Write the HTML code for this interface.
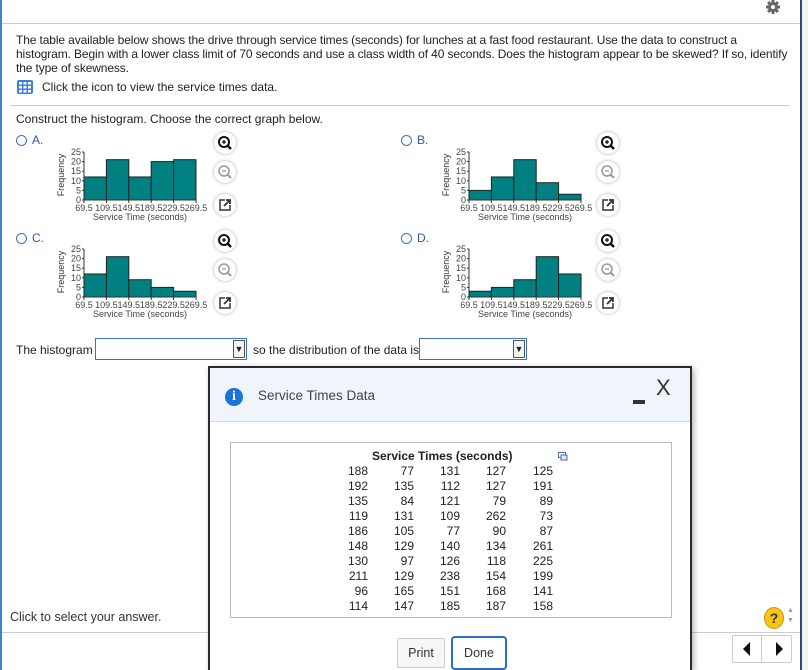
<!DOCTYPE html>
<html><head><meta charset="utf-8"><style>
*{margin:0;padding:0;box-sizing:border-box}
body{width:808px;height:670px;overflow:hidden;background:#fff;font-family:"Liberation Sans",Arial,sans-serif;color:#222;position:relative}
.abs{position:absolute}
.t{font-size:12px;line-height:14px}
.ic{position:absolute;width:22px;height:22px;border-radius:50%;background:#fff;box-shadow:0 0 3px rgba(0,0,0,.35)}
.radio{position:absolute;width:11px;height:11px;border:1.5px solid #4a6fb5;border-radius:50%}
.lab{position:absolute;font-size:12px;color:#3355aa}
.sel{position:absolute;height:22px;border:1px solid #3b6fd0;background:#fff}
.sel span{position:absolute;right:1px;top:1px;width:12px;height:18px;border:1px solid #555;background:#f4f4f4;font-size:9px;text-align:center;line-height:17px}
.dt td{font-size:12px;text-align:right;padding:0;height:15px;line-height:15px}
</style></head><body>
<div class="abs" style="left:0;top:0;width:2px;height:670px;background:#3b83d6"></div>
<div class="abs" style="left:800px;top:0;width:2px;height:670px;background:#2a4a7a"></div>
<div class="abs" style="left:802px;top:0;width:6px;height:670px;background:#f3f3f3"></div>
<div class="abs" style="left:2px;top:23px;width:798px;height:1px;background:#c8ced8"></div>
<svg class="abs" style="left:764px;top:0" width="18" height="16" viewBox="0 0 18 16"><g fill="#666"><circle cx="9" cy="7" r="5"/><rect x="7.5" y="0" width="3" height="14"/><rect x="2" y="5.5" width="14" height="3"/><rect x="7.5" y="0" width="3" height="14" transform="rotate(45 9 7)"/><rect x="7.5" y="0" width="3" height="14" transform="rotate(-45 9 7)"/></g><circle cx="9" cy="7" r="2" fill="#fff"/></svg>

<div class="abs t" style="left:16px;top:33px;white-space:nowrap;letter-spacing:-0.12px">The table available below shows the drive through service times (seconds) for lunches at a fast food restaurant. Use the data to construct a<br>histogram. Begin with a lower class limit of 70 seconds and use a class width of 40 seconds. Does the histogram appear to be skewed? If so, identify<br>the type of skewness.</div>
<svg class="abs" style="left:17px;top:80px" width="16" height="14"><rect width="16" height="14" rx="2" fill="#3b83d6"/><g fill="#fff"><rect x="2" y="2" width="3" height="2.5"/><rect x="6.5" y="2" width="3" height="2.5"/><rect x="11" y="2" width="3" height="2.5"/><rect x="2" y="6" width="3" height="2.5"/><rect x="6.5" y="6" width="3" height="2.5"/><rect x="11" y="6" width="3" height="2.5"/><rect x="2" y="10" width="3" height="2.5"/><rect x="6.5" y="10" width="3" height="2.5"/><rect x="11" y="10" width="3" height="2.5"/></g></svg>
<div class="abs t" style="left:42px;top:80px">Click the icon to view the service times data.</div>
<div class="abs" style="left:10px;top:105px;width:780px;height:1px;background:#c8ced8"></div>
<div class="abs t" style="left:16px;top:112px">Construct the histogram. Choose the correct graph below.</div>

<div class="radio" style="left:16px;top:135px"></div><div class="lab" style="left:32px;top:133px">A.</div>
<div class="radio" style="left:401px;top:135px"></div><div class="lab" style="left:417px;top:133px">B.</div>
<div class="radio" style="left:16px;top:233px"></div><div class="lab" style="left:32px;top:231px">C.</div>
<div class="radio" style="left:401px;top:233px"></div><div class="lab" style="left:417px;top:231px">D.</div>

<svg class="abs" style="left:55px;top:145px" width="170" height="80" id="cA"></svg>
<svg class="abs" style="left:440px;top:145px" width="170" height="80" id="cB"></svg>
<svg class="abs" style="left:55px;top:242px" width="170" height="80" id="cC"></svg>
<svg class="abs" style="left:440px;top:242px" width="170" height="80" id="cD"></svg>

<div class="abs t" style="left:16px;top:343px">The histogram</div>
<div class="sel" style="left:95px;top:338px;width:152px"><span>▼</span></div>
<div class="abs t" style="left:253px;top:343px">so the distribution of the data is</div>
<div class="sel" style="left:419px;top:338px;width:108px"><span>▼</span></div>

<div class="abs t" style="left:10px;top:610px;font-size:12.5px;color:#333">Click to select your answer.</div>
<div class="abs" style="left:2px;top:632px;width:798px;height:1px;background:#c8ced8"></div>
<div class="abs" style="left:764px;top:607px;width:20px;height:22px;border-radius:50%;background:#f5c518;border:1px solid #c99a00;text-align:center;font-weight:bold;font-size:14px;line-height:20px;color:#333">?</div>
<div class="abs" style="left:787px;top:606px;font-size:7px;color:#999;line-height:10px">▲<br>▼</div>
<div class="abs" style="left:732px;top:635px;width:60px;height:28px;border:1px solid #ccc;border-radius:2px;background:#fff"></div>
<div class="abs" style="left:761px;top:636px;width:1px;height:26px;background:#ccc"></div>
<svg class="abs" style="left:740px;top:641px" width="50" height="16"><polygon points="10,1 10,15 3,8" fill="#111"/><polygon points="36,1 36,15 43,8" fill="#111"/></svg>

<div class="abs" style="left:208px;top:366px;width:484px;height:304px;border:2px solid #2b2b2b;border-bottom:none;background:#fff;box-shadow:2px 2px 6px rgba(0,0,0,.3)">
 <div class="abs" style="left:0;top:0;width:480px;height:54px;background:#f0f5fc;border-bottom:1px solid #cfdcec"></div>
 <div class="abs" style="left:15px;top:20px;width:18px;height:18px;border-radius:50%;background:#1a73d6;color:#fff;font-weight:bold;font-family:'Liberation Serif',serif;font-size:14px;text-align:center;line-height:18px">i</div>
 <div class="abs" style="left:48px;top:20px;font-size:13.5px;color:#444">Service Times Data</div>
 <div class="abs" style="left:423px;top:32px;width:12px;height:4px;background:#333"></div>
 <div class="abs" style="left:446px;top:8px;font-size:22px;color:#333;line-height:24px">X</div>
 <div class="abs" style="left:20px;top:74px;width:442px;height:176px;border:1px solid #bbb"></div>
 <div class="abs" style="left:162px;top:81px;font-size:12px;font-weight:bold">Service Times (seconds)</div>
 <svg class="abs" style="left:348px;top:84px" width="10" height="10"><rect x="0.5" y="0.5" width="7" height="5" fill="#fff" stroke="#4a6fb5"/><rect x="3" y="3" width="6" height="5" fill="#dde6f5" stroke="#4a6fb5"/></svg>
 <table class="dt abs" style="left:132px;top:96px;border-collapse:collapse">
 <tr><td style="width:26px">188</td><td style="width:46px">77</td><td style="width:46px">131</td><td style="width:46px">127</td><td style="width:47px">125</td></tr>
 <tr><td>192</td><td>135</td><td>112</td><td>127</td><td>191</td></tr>
 <tr><td>135</td><td>84</td><td>121</td><td>79</td><td>89</td></tr>
 <tr><td>119</td><td>131</td><td>109</td><td>262</td><td>73</td></tr>
 <tr><td>186</td><td>105</td><td>77</td><td>90</td><td>87</td></tr>
 <tr><td>148</td><td>129</td><td>140</td><td>134</td><td>261</td></tr>
 <tr><td>130</td><td>97</td><td>126</td><td>118</td><td>225</td></tr>
 <tr><td>211</td><td>129</td><td>238</td><td>154</td><td>199</td></tr>
 <tr><td>96</td><td>165</td><td>151</td><td>168</td><td>141</td></tr>
 <tr><td>114</td><td>147</td><td>185</td><td>187</td><td>158</td></tr>
 </table>
 <div class="abs" style="left:187px;top:270px;width:48px;height:30px;border:1px solid #ccc;border-radius:2px;background:#f6f6f6;font-size:12.5px;text-align:center;line-height:28px;color:#333">Print</div>
 <div class="abs" style="left:241px;top:268px;width:56px;height:34px;border:2px solid #2a6fc4;border-radius:4px;background:#fff;font-size:12.5px;text-align:center;line-height:30px;color:#333">Done</div>
</div>

<script>
function chart(id,h){
 var s='',x0=29,y0=55,w=22.4,k=1.92;
 s+='<text x="9" y="30" transform="rotate(-90 9 30)" font-size="9" text-anchor="middle" fill="#333" font-family="Liberation Sans">Frequency</text>';
 for(var i=0;i<=5;i++){var y=y0-i*5*k;s+='<text x="'+(x0-3)+'" y="'+(y+3)+'" font-size="9" text-anchor="end" fill="#444" font-family="Liberation Sans">'+(i*5)+'</text><line x1="'+(x0-2)+'" x2="'+x0+'" y1="'+y+'" y2="'+y+'" stroke="#333"/>';}
 s+='<line x1="'+x0+'" x2="'+x0+'" y1="'+(y0-48)+'" y2="'+y0+'" stroke="#333"/>';
 for(var i=0;i<5;i++){var bh=h[i]*k;s+='<rect x="'+(x0+i*w)+'" y="'+(y0-bh)+'" width="'+w+'" height="'+bh+'" fill="#008080" stroke="#222" stroke-width="1"/>';}
 s+='<line x1="'+x0+'" x2="'+(x0+5*w)+'" y1="'+y0+'" y2="'+y0+'" stroke="#333"/>';
 var L=['69.5','109.5','149.5','189.5','229.5','269.5'];
 for(var i=0;i<6;i++){var x=x0+i*w;s+='<line x1="'+x+'" x2="'+x+'" y1="'+y0+'" y2="'+(y0+3)+'" stroke="#333"/><text x="'+x+'" y="'+(y0+11)+'" font-size="9" text-anchor="middle" fill="#444" font-family="Liberation Sans">'+L[i]+'</text>';}
 s+='<text x="85" y="'+(y0+20)+'" font-size="9" text-anchor="middle" fill="#444" font-family="Liberation Sans">Service Time (seconds)</text>';
 document.getElementById(id).innerHTML=s;
}
chart('cA',[12,21,12,20,21]);chart('cB',[5,12,21,9,3]);chart('cC',[12,21,9,5,3]);chart('cD',[3,5,9,21,12]);
function icons(cx,top){
 var z=['<svg width="22" height="22"><circle cx="10" cy="10" r="5" fill="none" stroke="#111" stroke-width="2"/><line x1="13.5" y1="13.5" x2="17" y2="17" stroke="#111" stroke-width="2.5"/><line x1="8" y1="10" x2="12" y2="10" stroke="#111" stroke-width="1.3"/><line x1="10" y1="8" x2="10" y2="12" stroke="#111" stroke-width="1.3"/></svg>',
 '<svg width="22" height="22"><circle cx="10" cy="10" r="5" fill="none" stroke="#999" stroke-width="1.5"/><line x1="13.5" y1="13.5" x2="17" y2="17" stroke="#999" stroke-width="2"/><line x1="8" y1="10" x2="12" y2="10" stroke="#999" stroke-width="1.3"/></svg>',
 '<svg width="22" height="22"><path d="M11 6H6v10h10v-5" fill="none" stroke="#333" stroke-width="1.5"/><path d="M10 12l6-6M12 6h4v4" fill="none" stroke="#333" stroke-width="1.8"/></svg>'];
 var t=[top,top+29,top+62];
 for(var i=0;i<3;i++){var d=document.createElement('div');d.className='ic';d.style.left=(cx-11)+'px';d.style.top=(t[i]-11)+'px';d.innerHTML=z[i];document.body.appendChild(d);}
}
icons(225,143);icons(608,143);icons(225,241);icons(608,241);
</script>
</body></html>
